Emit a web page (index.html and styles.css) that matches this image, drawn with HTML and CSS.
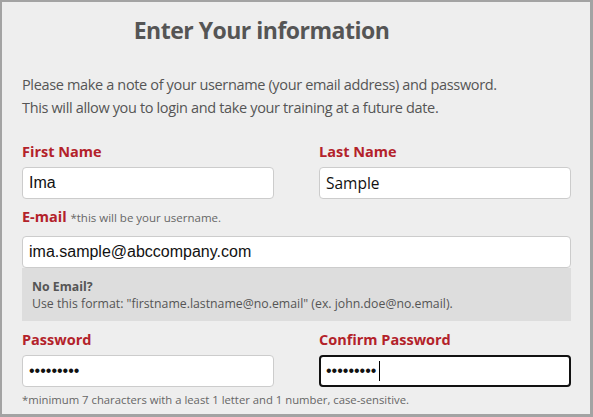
FILE: index.html
```
<!DOCTYPE html>
<html lang="en">
<head>
    <meta charset="UTF-8">
    <meta name="viewport" content="width=device-width, initial-scale=1.0">
    <title>Enter Your information</title>
    <link rel="stylesheet" href="styles.css">
</head>
<body>

<div class="panel">
    <h1>Enter Your information</h1>
    <p class="intro">Please make a note of your username (your email address) and password.<br>This will allow you to login and take your training at a future date.</p>

    <form class="form-grid">
        <div class="field">
            <label for="first-name">First Name</label>
            <input type="text" id="first-name" class="arial" value="Ima">
        </div>
        <div class="field">
            <label for="last-name">Last Name</label>
            <input type="text" id="last-name" value="Sample">
        </div>

        <div class="field wide">
            <label for="email" class="email-label">E-mail <small>*this will be your username.</small></label>
            <input type="text" id="email" class="arial" value="ima.sample@abccompany.com">
            <div class="note">
                <strong>No Email?</strong>
                Use this format: "firstname.lastname@no.email" (ex. john.doe@no.email).
            </div>
        </div>

        <div class="field pass">
            <label for="password">Password</label>
            <input type="password" id="password" value="123456789">
        </div>
        <div class="field pass">
            <label for="confirm">Confirm Password</label>
            <div class="input-wrap">
                <input type="password" id="confirm" class="focused" value="123456789">
                <span class="caret"></span>
            </div>
        </div>

        <p class="hint wide">*minimum 7 characters with a least 1 letter and 1 number, case-sensitive.</p>
    </form>
</div>

</body>
</html>
```

FILE: styles.css
```
/* registration panel */
html {
    background-color: #a3a3a3;
}
body {
    font-family: "Open Sans", sans-serif;
    margin: 2px 3px 3px 2px;
    background-color: #eeeeee;
    color: #555555;
    height: 412px;
}
.panel {
    padding: 12px 19px 0 20px;
}
h1 {
    margin: 0;
    padding-right: 70px;
    font-size: 23px;
    letter-spacing: -0.5px;
    line-height: 32px;
    text-align: center;
    font-weight: 700;
    color: #555555;
}
.intro {
    margin: 27px 0 0;
    font-size: 14.5px;
    letter-spacing: -0.35px;
    line-height: 23px;
}
.form-grid {
    display: grid;
    grid-template-columns: 252px 252px;
    column-gap: 45px;
    margin-top: 24px;
}
.wide {
    grid-column: 1 / 3;
}
label {
    display: block;
    color: #b3222a;
    font-weight: 700;
    font-size: 14.5px;
    line-height: 18px;
    margin: 9px 0 6px;
}
.field:first-child label,
.field:nth-child(2) label {
    margin-top: 0;
}
.pass label {
    margin-top: 10px;
}
label.email-label {
    margin-bottom: 9px;
}
label small {
    font-size: 11.5px;
    font-weight: 400;
    color: #666666;
}
input {
    display: block;
    box-sizing: border-box;
    width: 100%;
    height: 32px;
    margin: 0;
    padding: 0 6px;
    border: 1px solid #cccccc;
    border-radius: 4px;
    background-color: white;
    font-family: "Open Sans", sans-serif;
    font-size: 15.5px;
    color: #111111;
    outline: none;
}
input.arial {
    font-family: "Liberation Sans", Arial, sans-serif;
    font-size: 16px;
}
input[type="password"] {
    font-family: "Liberation Sans", Arial, sans-serif;
    font-size: 16px;
}
input.focused {
    border: 2px solid #111111;
    padding: 0 5px;
}
.input-wrap {
    position: relative;
}
.caret {
    position: absolute;
    left: 60px;
    top: 6px;
    width: 1px;
    height: 20px;
    background-color: #000000;
}
.note {
    background-color: #dddddd;
    padding: 10px 10px 9px 10px;
    font-size: 12.3px;
    line-height: 17px;
    color: #555555;
}
.note strong {
    display: block;
    font-size: 12.3px;
}
.hint {
    margin: 5px 0 0;
    font-size: 11.3px;
    line-height: 16px;
    color: #666666;
}
```
